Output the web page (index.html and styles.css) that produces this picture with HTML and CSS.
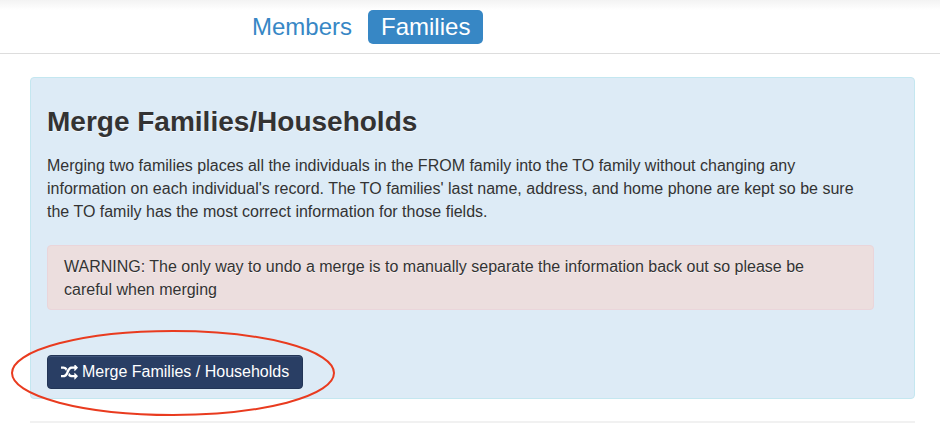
FILE: index.html
```html
<!DOCTYPE html>
<html lang="en">
<head>
<meta charset="utf-8">
<title>Merge Families/Households</title>
<link rel="stylesheet" href="styles.css">
</head>
<body>
<nav class="tabs">
  <a class="tab" href="#members">Members</a>
  <a class="tab tab-active" href="#families">Families</a>
</nav>
<main class="content">
  <section class="panel">
    <h1 class="title">Merge Families/Households</h1>
    <p class="intro">Merging two families places all the individuals in the FROM family into the TO family without changing any information on each individual's record. The TO families' last name, address, and home phone are kept so be sure the TO family has the most correct information for those fields.</p>
    <p class="warning">WARNING: The only way to undo a merge is to manually separate the information back out so please be careful when merging</p>
    <div class="action">
      <button class="merge" type="button">
        <svg class="icon" viewBox="0 0 1792 1536" aria-hidden="true"><path fill="currentColor" d="M666 353q-60 92-137 273-22-45-37-72.500t-40.500-63.500-51-56.500-63-35-81.500-14.500h-224q-14 0-23-9t-9-23v-192q0-14 9-23t23-9h224q250 0 410 225zM1792 1152q0 14-9 23l-320 320q-9 9-23 9-13 0-22.500-9.500t-9.500-22.500v-192q-32 0-85 .5t-81 1-73-1-71-5-64-10.500-63-18.500-58-28.500-59-40-55-53.500-56-69.500q59-93 136-273 22 45 37 72.500t40.500 63.500 51 56.500 63 35 81.500 14.500h256v-192q0-14 9-23t23-9q12 0 24 10l319 319q9 9 9 23zM1792 256q0 14-9 23l-320 320q-9 9-23 9-13 0-22.500-9.500t-9.500-22.500v-192h-256q-48 0-87 15t-69 45-51 61.500-45 77.500q-32 62-78 171-29 66-49.500 111t-54 105-64 100-74 83-90 68.500-106.500 42-128 16.500h-224q-14 0-23-9t-9-23v-192q0-14 9-23t23-9h224q48 0 87-15t69-45 51-61.500 45-77.500q32-62 78-171 29-66 49.500-111t54-105 64-100 74-83 90-68.500 106.500-42 128-16.500h256v-192q0-14 9-23t23-9q12 0 24 10l319 319q9 9 9 23z"/></svg>
        <span>Merge Families / Households</span>
      </button>
      <svg class="ring" viewBox="0 0 326 88" aria-hidden="true"><ellipse cx="163" cy="44" rx="161" ry="42" fill="none" stroke="#e93b1f" stroke-width="2"/></svg>
    </div>
  </section>
  <hr class="rule">
</main>
</body>
</html>
```

FILE: styles.css
```css
* {
  box-sizing: border-box;
}

body {
  margin: 0;
  background: #fff;
  color: #333;
  font: 16px/23px "Liberation Sans", Arial, sans-serif;
}

.tabs {
  display: flex;
  gap: 16px;
  padding: 10px 20px 9px 252px;
  border-bottom: 1px solid #ddd;
  background: linear-gradient(#f3f3f3, #fff 10px);
  font-size: 24px;
  line-height: 34px;
}

.tab {
  color: #3787c5;
  text-decoration: none;
}

.tab-active {
  padding: 0 13px;
  border-radius: 5px;
  background: #3787c5;
  color: #fff;
}

.content {
  padding: 23px 25px 0 30px;
}

.panel {
  padding: 25px 40px 9px 16px;
  border: 1px solid #c4e7f0;
  border-radius: 4px;
  background: #ddebf6;
}

.title {
  margin: 0 0 13px;
  font-size: 28px;
  line-height: 38px;
  text-shadow: 0 1px 0 #f4f8fc;
}

.intro {
  margin: 0 0 22px;
}

.warning {
  margin: 0 0 45px;
  padding: 9px 40px 8px 16px;
  border: 1px solid #ead5da;
  border-radius: 4px;
  background: #ecdede;
  text-shadow: 0 1px 0 #f7f0f0;
}

.action {
  position: relative;
  display: flex;
}

.merge {
  display: flex;
  align-items: center;
  gap: 4px;
  padding: 5px 13px;
  border: 1px solid #223556;
  border-radius: 4px;
  background: #293e64;
  box-shadow: inset 0 1px 0 #40557b;
  color: #fff;
  font: inherit;
  line-height: 22px;
  cursor: pointer;
}

.icon {
  width: 17px;
  height: 15px;
}

.ring {
  position: absolute;
  top: -26px;
  left: -37px;
  width: 326px;
  height: 88px;
  pointer-events: none;
}

.rule {
  margin: 22px 0 0;
  border: 0;
  border-top: 2px solid #f1f1f1;
}
```
